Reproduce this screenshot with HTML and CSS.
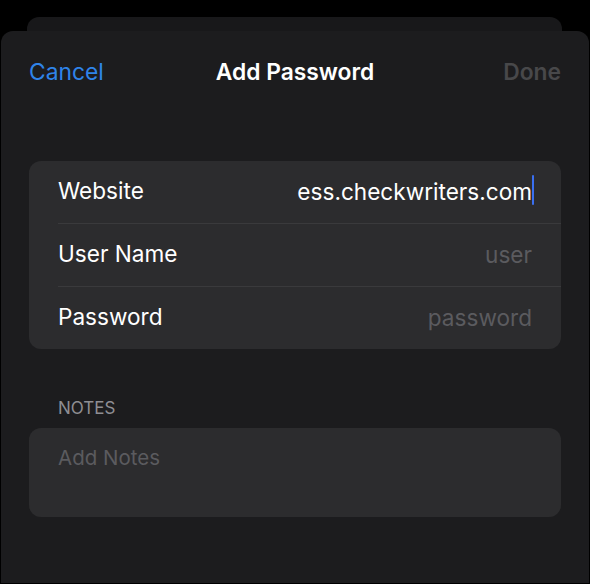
FILE: index.html
```html
<!DOCTYPE html>
<html lang="en">
<head>
<meta charset="utf-8">
<title>Add Password</title>
<link rel="stylesheet" href="styles.css">
</head>
<body>
<div class="screen">
  <div class="sheet-behind"></div>
  <div class="sheet">
    <header class="nav">
      <span class="nav-btn cancel">Cancel</span>
      <span class="nav-title">Add Password</span>
      <span class="nav-btn done">Done</span>
    </header>

    <section class="group">
      <div class="row">
        <span class="label">Website</span>
        <span class="value">ess.checkwriters.com<span class="caret"></span></span>
      </div>
      <div class="row">
        <span class="label">User Name</span>
        <span class="value placeholder">user</span>
      </div>
      <div class="row">
        <span class="label">Password</span>
        <span class="value placeholder">password</span>
      </div>
    </section>

    <h2 class="section-title">NOTES</h2>
    <section class="notes">
      <span class="placeholder">Add Notes</span>
    </section>
  </div>
</div>
</body>
</html>
```
FILE: styles.css
```css
* { box-sizing: border-box; }

html, body {
  margin: 0;
  padding: 0;
  background: #000;
}

body {
  font-family: Inter, "Noto Sans", "Liberation Sans", sans-serif;
  color: #fff;
  width: 590px;
  height: 584px;
  overflow: hidden;
}

.screen {
  display: flex;
  flex-direction: column;
  height: 584px;
  padding: 17px 1px 1px;
}

.sheet-behind {
  height: 14px;
  margin: 0 27px 0 26px;
  background: #18181a;
  border-radius: 12px 12px 0 0;
  flex: none;
}

.sheet {
  flex: 1;
  background: #1c1c1e;
  border-radius: 12px 12px 0 0;
  padding: 0 28px;
}

/* three-column bar keeps the title centred regardless of button widths */
.nav {
  display: grid;
  grid-template-columns: 1fr auto 1fr;
  align-items: center;
  height: 81px;
  font-size: 22.8px;
}

.nav-btn.cancel { color: #2f84ea; justify-self: start; }
.nav-btn.done { color: #48484a; font-weight: 600; justify-self: end; }
.nav-title { font-weight: 600; color: #fff; }

.group {
  margin-top: 49px;
  background: #2c2c2e;
  border-radius: 12px;
  padding-left: 29px;
}

.row {
  display: flex;
  align-items: center;
  justify-content: space-between;
  height: 63px;
  padding-right: 29px;
  font-size: 22.6px;
  border-bottom: 1px solid #3a3a3c;
}

.row:last-child { border-bottom: none; height: 62px; }

.label { color: #fff; padding-bottom: 3px; }

.value {
  color: #fff;
  position: relative;
  padding-bottom: 1px;
}

.placeholder { color: #5b5b5f; }

.caret {
  position: absolute;
  right: -2px;
  top: -3px;
  width: 2px;
  height: 30px;
  background: #3a6ff0;
  border-radius: 1px;
}

.section-title {
  margin: 49px 0 0 29px;
  font-size: 17px;
  font-weight: 400;
  color: #8e8e93;
  line-height: 20px;
}

.notes {
  margin-top: 10px;
  height: 89px;
  background: #2c2c2e;
  border-radius: 12px;
  padding: 17px 29px;
  font-size: 20.5px;
}
```
